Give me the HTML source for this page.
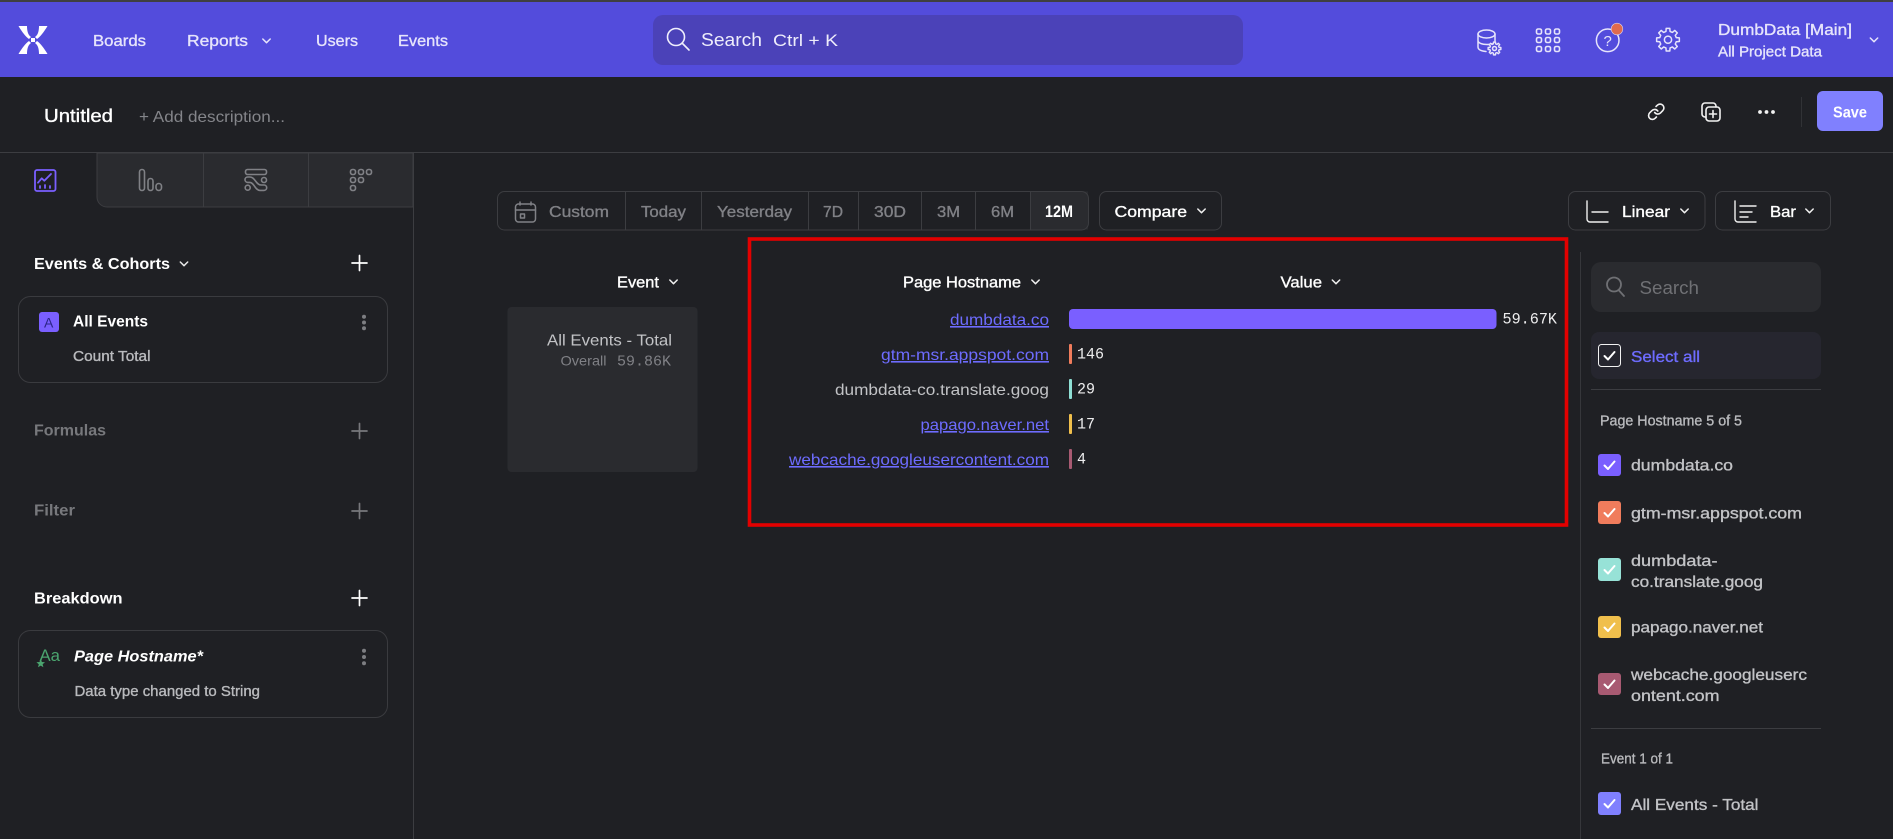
<!DOCTYPE html>
<html lang="en"><head><meta charset="utf-8"><title>Untitled</title>
<style>
html,body{margin:0;padding:0;background:#1f2024;width:1893px;height:839px;overflow:hidden}
svg{display:block}
text{font-family:"Liberation Sans",sans-serif;white-space:pre}
.m{stroke:currentColor;stroke-width:.35}
.mono{font-family:"Liberation Mono",monospace}
.ic{fill:none;stroke-linecap:round;stroke-linejoin:round}
</style></head><body>
<svg xmlns="http://www.w3.org/2000/svg" width="1893" height="839" viewBox="0 0 1893 839">
<defs>
<polygon id="gear" points="8.25,-2.06 11.36,-1.8 11.36,1.8 8.25,2.06 7.29,4.38 9.3,6.76 6.76,9.3 4.38,7.29 2.06,8.25 1.8,11.36 -1.8,11.36 -2.06,8.25 -4.38,7.29 -6.76,9.3 -9.3,6.76 -7.29,4.38 -8.25,2.06 -11.36,1.8 -11.36,-1.8 -8.25,-2.06 -7.29,-4.38 -9.3,-6.76 -6.76,-9.3 -4.38,-7.29 -2.06,-8.25 -1.8,-11.36 1.8,-11.36 2.06,-8.25 4.38,-7.29 6.76,-9.3 9.3,-6.76 7.29,-4.38"/>
<polyline id="chk" points="6.5,12 10,15.5 16.5,8" fill="none" stroke="#fff" stroke-width="2" stroke-linecap="round" stroke-linejoin="round"/>
<path id="chev" d="M.8 .5l3.7 3.7L8.2 .5" fill="none" stroke-width="1.5" stroke-linecap="round" stroke-linejoin="round"/>
<path id="plus" d="M352 0H367M359.5-7.5V7.5" fill="none" stroke-width="1.7" stroke-linecap="round"/>
</defs>

<rect width="1893" height="839" fill="#1f2024"/>

<!-- Top nav -->
<rect width="1893" height="77" fill="#534cdc"/>
<rect width="1893" height="2" fill="#3f3f42"/>
<g fill="#fff">
<path d="M18.5 26H27C27 31 28 35 31 37L29 39C26 37 22 32 18.5 26Z"/>
<path d="M47.5 26H39C39 31 38 35 35 37L37 39C40 37 44 32 47.5 26Z"/>
<path d="M18.5 54H27C27 49 28 45 31 43L29 41C26 43 22 48 18.5 54Z"/>
<path d="M47.5 54H39C39 49 38 45 35 43L37 41C40 43 44 48 47.5 54Z"/>
<rect x="31" y="38" width="4" height="4"/>
</g>
<g fill="#e6e4fb" font-size="16">
<text class="m" color="#e6e4fb" x="93" y="46" textLength="53" lengthAdjust="spacingAndGlyphs">Boards</text>
<text class="m" color="#e6e4fb" x="187" y="46" textLength="61" lengthAdjust="spacingAndGlyphs">Reports</text>
<text class="m" color="#e6e4fb" x="316" y="46" textLength="42" lengthAdjust="spacingAndGlyphs">Users</text>
<text class="m" color="#e6e4fb" x="398" y="46" textLength="50" lengthAdjust="spacingAndGlyphs">Events</text>
</g>
<use href="#chev" x="262" y="38.5" stroke="#e6e4fb"/>
<rect x="653" y="15" width="590" height="50" rx="10" fill="#4b42b8"/>
<g class="ic" stroke="#f0effc" stroke-width="1.6"><circle cx="676" cy="37" r="8.5"/><path d="M682.5 43.5L689 50"/></g>
<text x="701" y="46" font-size="18" fill="#eeedfb" textLength="61" lengthAdjust="spacingAndGlyphs">Search</text>
<text x="773" y="46" font-size="17" fill="#eeedfb" textLength="65" lengthAdjust="spacingAndGlyphs">Ctrl + K</text>

<!-- nav icons -->
<g class="ic" stroke="#e6e4fb" stroke-width="1.5">
<ellipse cx="1486.5" cy="34" rx="8.5" ry="4"/>
<path d="M1478 34V47C1478 49.5 1481 51 1486 51.5M1478 40.5C1478 43 1482 44.5 1487 44.5C1489 44.5 1491 44.2 1492 43.8M1495 34V41"/>
<use href="#gear" transform="translate(1494.5 48.5) scale(.56)" fill="#534cdc" stroke-width="2.6"/>
<circle cx="1494.5" cy="48.5" r="2"/>
<g stroke-width="1.6">
<rect x="1536.5" y="29" width="5" height="5" rx="1.6"/><rect x="1545.5" y="29" width="5" height="5" rx="1.6"/><rect x="1554.5" y="29" width="5" height="5" rx="1.6"/>
<rect x="1536.5" y="37.5" width="5" height="5" rx="1.6"/><rect x="1545.5" y="37.5" width="5" height="5" rx="1.6"/><rect x="1554.5" y="37.5" width="5" height="5" rx="1.6"/>
<rect x="1536.5" y="46.5" width="5" height="5" rx="1.6"/><rect x="1545.5" y="46.5" width="5" height="5" rx="1.6"/><rect x="1554.5" y="46.5" width="5" height="5" rx="1.6"/>
</g>
<circle cx="1607.7" cy="40.3" r="11.3"/>
<use href="#gear" transform="translate(1668 39.7)"/>
<circle cx="1668" cy="39.7" r="3.6"/>
</g>
<text x="1603.5" y="46" font-size="15" fill="#e6e4fb">?</text>
<circle cx="1617" cy="29" r="5.8" fill="#e06a4e" stroke="#d8d5f5" stroke-width=".6"/>
<text class="m" color="#e6e4fb" x="1718" y="35" font-size="16" fill="#e6e4fb" textLength="134" lengthAdjust="spacingAndGlyphs">DumbData [Main]</text>
<text class="m" color="#e6e4fb" x="1718" y="56.5" font-size="14.5" fill="#e6e4fb" textLength="104" lengthAdjust="spacingAndGlyphs">All Project Data</text>
<use href="#chev" x="1869.5" y="37.5" stroke="#e6e4fb"/>

<!-- Title bar -->
<text class="m" color="#fff" x="44" y="122" font-size="18" fill="#fff" textLength="69" lengthAdjust="spacingAndGlyphs">Untitled</text>
<text x="139" y="122" font-size="16" fill="#84858a" textLength="146" lengthAdjust="spacingAndGlyphs">+ Add description...</text>
<path transform="translate(1647 102.5) scale(.77)" class="ic" stroke="#f2f2f2" stroke-width="2.1" d="M10 13a5 5 0 0 0 7.54.54l3-3a5 5 0 0 0-7.07-7.07l-1.72 1.71M14 11a5 5 0 0 0-7.54-.54l-3 3a5 5 0 0 0 7.07 7.07l1.71-1.71"/>
<g class="ic" stroke="#f2f2f2" stroke-width="1.6">
<path d="M1706 117H1705A3 3 0 0 1 1702 114V106A3 3 0 0 1 1705 103H1713A3 3 0 0 1 1716 106V107"/>
<rect x="1706" y="107" width="14" height="14" rx="3"/>
<path d="M1713 110.5V117.5M1709.5 114H1716.5"/>
</g>
<g fill="#f2f2f2"><circle cx="1760" cy="112" r="1.9"/><circle cx="1766.5" cy="112" r="1.9"/><circle cx="1773" cy="112" r="1.9"/></g>
<rect x="1801" y="97" width="1" height="30" fill="#313236"/>
<rect x="1817" y="91" width="66" height="40" rx="6" fill="#8080fe"/>
<text x="1833" y="117.5" font-size="16" font-weight="700" fill="#fff" textLength="34" lengthAdjust="spacingAndGlyphs">Save</text>
<rect y="152" width="1893" height="1" fill="#3c3d41"/>

<!-- Left sidebar tabs -->
<path d="M97 153H413V207H107A10 10 0 0 1 97 197Z" fill="#2a2b2f" stroke="#3c3d41"/>
<rect x="203" y="153" width="1" height="54" fill="#3c3d41"/>
<rect x="308" y="153" width="1" height="54" fill="#3c3d41"/>
<rect x="413" y="153" width="1" height="686" fill="#3c3d41"/>
<g class="ic" stroke="#7a5fff" stroke-width="1.8">
<rect x="35" y="170" width="20.5" height="21" rx="2"/>
<path d="M38 182.7L41.7 178.3L44.3 180.7L51 174"/>
<path d="M40 186V188M45 185V188M50 186V188"/>
</g>
<g class="ic" stroke="#808186" stroke-width="1.6">
<rect x="139.5" y="169.5" width="5" height="21" rx="2.5"/>
<rect x="148" y="178.5" width="5" height="12" rx="2.5"/>
<rect x="156" y="183.5" width="5.5" height="7" rx="2.7"/>
<rect x="245.5" y="169.5" width="21" height="5" rx="2"/>
<path d="M250 177.5C255 177.5 256 185.5 261 185.5H264A2.7 2.7 0 0 1 264 190.9H260C255 190.9 254 182.9 250 182.9H247.7A2.7 2.7 0 0 1 247.7 177.5Z" transform="translate(0 -.5)"/>
<circle cx="264" cy="180" r="2.5"/><circle cx="247.7" cy="187.7" r="2.5"/>
<rect x="350.5" y="169.5" width="5" height="5" rx="2"/><rect x="358.5" y="169.5" width="5" height="5" rx="2"/><rect x="366.5" y="169.5" width="5" height="5" rx="2"/>
<rect x="350.5" y="177.5" width="5" height="5" rx="2"/><rect x="358.5" y="177.5" width="5" height="5" rx="2"/>
<rect x="350.5" y="185.5" width="5" height="5" rx="2"/>
</g>

<!-- Left sidebar contents -->
<text x="34" y="269" font-size="16" font-weight="700" fill="#fff" textLength="136" lengthAdjust="spacingAndGlyphs">Events &amp; Cohorts</text>
<use href="#chev" x="179.5" y="261.5" stroke="#e8e8e8"/>
<use href="#plus" y="263" stroke="#fff"/>
<rect x="18.5" y="296.5" width="369" height="86" rx="12" fill="none" stroke="#3a3b3f"/>
<rect x="39" y="312" width="20" height="20" rx="3" fill="#7a5fff"/>
<text x="44" y="327.5" font-size="14" fill="#2b2488">A</text>
<text x="73" y="326.5" font-size="16" font-weight="700" fill="#fff" textLength="75" lengthAdjust="spacingAndGlyphs">All Events</text>
<text class="m" color="#b9babd" x="73" y="361" font-size="14.5" fill="#b9babd" textLength="77.5" lengthAdjust="spacingAndGlyphs">Count Total</text>
<g fill="#7d7e82"><circle cx="364" cy="316.7" r="2"/><circle cx="364" cy="322.5" r="2"/><circle cx="364" cy="328.3" r="2"/></g>
<text x="34" y="435.5" font-size="16" font-weight="700" fill="#77787c" textLength="72" lengthAdjust="spacingAndGlyphs">Formulas</text>
<use href="#plus" y="431" stroke="#77787c"/>
<text x="34" y="515.5" font-size="16" font-weight="700" fill="#77787c" textLength="41" lengthAdjust="spacingAndGlyphs">Filter</text>
<use href="#plus" y="511" stroke="#77787c"/>
<text x="34" y="603.5" font-size="16" font-weight="700" fill="#fff" textLength="88.5" lengthAdjust="spacingAndGlyphs">Breakdown</text>
<use href="#plus" y="598" stroke="#fff"/>
<rect x="18.5" y="630.5" width="369" height="87" rx="12" fill="none" stroke="#3a3b3f"/>
<text x="39.5" y="661" font-size="17" fill="#4ba56f" textLength="20.5" lengthAdjust="spacingAndGlyphs">Aa</text>
<polygon points="40.7,659 41.9,662 45,662.2 42.6,664.2 43.4,667.3 40.7,665.6 38,667.3 38.8,664.2 36.4,662.2 39.5,662" fill="#4ba56f"/>
<text x="74" y="661.5" font-size="16" font-weight="700" font-style="italic" fill="#fff" textLength="129" lengthAdjust="spacingAndGlyphs">Page Hostname*</text>
<text class="m" color="#b9babd" x="74.5" y="696" font-size="14.5" fill="#b9babd" textLength="185.5" lengthAdjust="spacingAndGlyphs">Data type changed to String</text>
<g fill="#7d7e82"><circle cx="364" cy="650.7" r="2"/><circle cx="364" cy="657" r="2"/><circle cx="364" cy="663.3" r="2"/></g>

<!-- Date range group -->
<rect x="1030" y="191.5" width="58" height="38" fill="#2a2b2f"/>
<rect x="497.5" y="191.5" width="591" height="38.5" rx="7" fill="none" stroke="#3c3d41"/>
<g fill="#3c3d41">
<rect x="625" y="192" width="1" height="38"/><rect x="701" y="192" width="1" height="38"/><rect x="808" y="192" width="1" height="38"/><rect x="858" y="192" width="1" height="38"/><rect x="921" y="192" width="1" height="38"/><rect x="975" y="192" width="1" height="38"/><rect x="1030" y="192" width="1" height="38"/>
</g>
<g class="ic" stroke="#808186" stroke-width="1.5">
<rect x="515.5" y="204" width="20" height="18" rx="3"/>
<path d="M515.5 210H535.5M520 202V205M531 202V205"/>
<rect x="520.5" y="214" width="4" height="4"/>
</g>
<g font-size="16" fill="#808186">
<text class="m" color="#808186" x="549" y="217" textLength="60" lengthAdjust="spacingAndGlyphs">Custom</text>
<text class="m" color="#808186" x="641" y="217" textLength="45" lengthAdjust="spacingAndGlyphs">Today</text>
<text class="m" color="#808186" x="717" y="217" textLength="75" lengthAdjust="spacingAndGlyphs">Yesterday</text>
<text class="m" color="#808186" x="823" y="217" textLength="20" lengthAdjust="spacingAndGlyphs">7D</text>
<text class="m" color="#808186" x="874" y="217" textLength="32" lengthAdjust="spacingAndGlyphs">30D</text>
<text class="m" color="#808186" x="937" y="217" textLength="23" lengthAdjust="spacingAndGlyphs">3M</text>
<text class="m" color="#808186" x="991" y="217" textLength="23" lengthAdjust="spacingAndGlyphs">6M</text>
</g>
<text x="1045" y="217" font-size="17" font-weight="700" fill="#fff" textLength="28" lengthAdjust="spacingAndGlyphs">12M</text>
<rect x="1099.5" y="191.5" width="122" height="38.5" rx="7" fill="none" stroke="#3c3d41"/>
<text class="m" color="#fff" x="1114.5" y="217" font-size="16" fill="#fff" textLength="72.5" lengthAdjust="spacingAndGlyphs">Compare</text>
<use href="#chev" x="1197" y="208.5" stroke="#f0f0f0"/>

<!-- Linear/Bar -->
<rect x="1568.5" y="191.5" width="136.5" height="38.5" rx="7" fill="none" stroke="#3c3d41"/>
<g class="ic" stroke="#f0f0f0" stroke-width="1.4">
<path d="M1587 201V219A3 3 0 0 0 1590 222H1608M1592 212H1608"/>
</g>
<text class="m" color="#fff" x="1622" y="217" font-size="16" fill="#fff" textLength="48" lengthAdjust="spacingAndGlyphs">Linear</text>
<use href="#chev" x="1680" y="208.5" stroke="#f0f0f0"/>
<rect x="1715.5" y="191.5" width="115" height="38.5" rx="7" fill="none" stroke="#3c3d41"/>
<g class="ic" stroke="#f0f0f0" stroke-width="1.4">
<path d="M1735 201V219A3 3 0 0 0 1738 222H1756M1740 206H1756M1740 212H1752M1740 217H1748"/>
</g>
<text class="m" color="#fff" x="1770" y="217" font-size="16" fill="#fff" textLength="26" lengthAdjust="spacingAndGlyphs">Bar</text>
<use href="#chev" x="1805" y="208.5" stroke="#f0f0f0"/>

<!-- Event column -->
<text class="m" color="#fff" x="617" y="287.5" font-size="16" fill="#fff" textLength="42" lengthAdjust="spacingAndGlyphs">Event</text>
<use href="#chev" x="669" y="279.5" stroke="#f0f0f0"/>
<rect x="507.5" y="307" width="190" height="165" rx="4" fill="#2a2b2f"/>
<text x="547" y="345.5" font-size="16" fill="#c2c3c6" textLength="125" lengthAdjust="spacingAndGlyphs">All Events - Total</text>
<text x="560.5" y="365.5" font-size="14" fill="#808186" textLength="46" lengthAdjust="spacingAndGlyphs">Overall</text>
<text class="mono" x="617" y="365.5" font-size="15" fill="#808186" textLength="54" lengthAdjust="spacingAndGlyphs">59.86K</text>

<!-- Red highlight box -->
<rect x="749.5" y="239" width="817" height="286" fill="none" stroke="#e30000" stroke-width="3.6"/>

<!-- Breakdown column -->
<text class="m" color="#fff" x="903" y="287.5" font-size="16" fill="#fff" textLength="118" lengthAdjust="spacingAndGlyphs">Page Hostname</text>
<use href="#chev" x="1031" y="279.5" stroke="#f0f0f0"/>
<text class="m" color="#fff" x="1280.5" y="287.5" font-size="16" fill="#fff" textLength="41.5" lengthAdjust="spacingAndGlyphs">Value</text>
<use href="#chev" x="1331.5" y="279.5" stroke="#f0f0f0"/>
<g font-size="16">
<text x="950" y="325" fill="#6e6cff" text-decoration="underline" textLength="99" lengthAdjust="spacingAndGlyphs">dumbdata.co</text>
<text x="881" y="360" fill="#6e6cff" text-decoration="underline" textLength="168" lengthAdjust="spacingAndGlyphs">gtm-msr.appspot.com</text>
<text x="835" y="395" fill="#c2c3c6" textLength="214" lengthAdjust="spacingAndGlyphs">dumbdata-co.translate.goog</text>
<text x="920.5" y="430" fill="#6e6cff" text-decoration="underline" textLength="128.5" lengthAdjust="spacingAndGlyphs">papago.naver.net</text>
<text x="789" y="465" fill="#6e6cff" text-decoration="underline" textLength="260" lengthAdjust="spacingAndGlyphs">webcache.googleusercontent.com</text>
</g>
<rect x="1069" y="309" width="427.5" height="20" rx="4" fill="#7a5fff"/>
<rect x="1069" y="344" width="3" height="20" rx="1" fill="#f07c5c"/>
<rect x="1069" y="379" width="3" height="20" rx="1" fill="#8fe0d5"/>
<rect x="1069" y="414" width="3" height="20" rx="1" fill="#f0bf4c"/>
<rect x="1069" y="449" width="3" height="20" rx="1" fill="#a85a72"/>
<g font-size="16" fill="#ededee">
<text class="mono" x="1502.5" y="323.5" textLength="54.5" lengthAdjust="spacingAndGlyphs">59.67K</text>
<text class="mono" x="1077" y="358.5" textLength="27" lengthAdjust="spacingAndGlyphs">146</text>
<text class="mono" x="1077" y="393.5" textLength="18" lengthAdjust="spacingAndGlyphs">29</text>
<text class="mono" x="1077" y="428.5" textLength="18" lengthAdjust="spacingAndGlyphs">17</text>
<text class="mono" x="1077" y="463.5" textLength="9" lengthAdjust="spacingAndGlyphs">4</text>
</g>

<!-- Right legend panel -->
<rect x="1580" y="252" width="1" height="587" fill="#36373b"/>
<rect x="1591" y="262" width="230" height="50" rx="10" fill="#2a2b2f"/>
<g class="ic" stroke="#6f7074" stroke-width="1.8"><circle cx="1614" cy="284.5" r="7"/><path d="M1619 290.5L1624 296"/></g>
<text x="1639.5" y="294" font-size="18" fill="#6f7074" textLength="59.5" lengthAdjust="spacingAndGlyphs">Search</text>
<rect x="1591" y="332" width="230" height="47" rx="8" fill="#26262f"/>
<rect x="1598.5" y="344.5" width="22" height="22" rx="3" fill="none" stroke="#f2f2f2"/>
<use href="#chk" x="1598" y="344" style="stroke-width:1.6"/>
<text class="m" color="#6e6cff" x="1631" y="362" font-size="16" fill="#6e6cff" textLength="69" lengthAdjust="spacingAndGlyphs">Select all</text>
<rect x="1591" y="389" width="230" height="1" fill="#3c3d41"/>
<text class="m" color="#b9babd" x="1600" y="425.5" font-size="15" fill="#b9babd" textLength="142" lengthAdjust="spacingAndGlyphs">Page Hostname 5 of 5</text>

<rect x="1598" y="454" width="23" height="22" rx="3" fill="#7a5fff"/><use href="#chk" x="1598" y="453.5"/>
<rect x="1598" y="501" width="23" height="23" rx="3" fill="#f07c5c"/><use href="#chk" x="1598" y="501"/>
<rect x="1598" y="558" width="23" height="23" rx="3" fill="#97e2d7"/><use href="#chk" x="1598" y="558"/>
<rect x="1598" y="616" width="23" height="22" rx="3" fill="#f0bf4c"/><use href="#chk" x="1598" y="615.5"/>
<rect x="1598" y="673" width="23" height="22" rx="3" fill="#a85a72"/><use href="#chk" x="1598" y="672.5"/>
<g font-size="16" fill="#c2c3c6">
<text class="m" color="#c2c3c6" x="1631" y="470.5" textLength="102" lengthAdjust="spacingAndGlyphs">dumbdata.co</text>
<text class="m" color="#c2c3c6" x="1631" y="518.5" textLength="171" lengthAdjust="spacingAndGlyphs">gtm-msr.appspot.com</text>
<text class="m" color="#c2c3c6" x="1631" y="566" textLength="86.5" lengthAdjust="spacingAndGlyphs">dumbdata-</text>
<text class="m" color="#c2c3c6" x="1631" y="587" textLength="132" lengthAdjust="spacingAndGlyphs">co.translate.goog</text>
<text class="m" color="#c2c3c6" x="1631" y="632.5" textLength="132" lengthAdjust="spacingAndGlyphs">papago.naver.net</text>
<text class="m" color="#c2c3c6" x="1631" y="680" textLength="176" lengthAdjust="spacingAndGlyphs">webcache.googleuserc</text>
<text class="m" color="#c2c3c6" x="1631" y="701" textLength="88.5" lengthAdjust="spacingAndGlyphs">ontent.com</text>
</g>
<rect x="1591" y="728" width="230" height="1" fill="#3c3d41"/>
<text class="m" color="#b9babd" x="1601" y="763.5" font-size="15" fill="#b9babd" textLength="72" lengthAdjust="spacingAndGlyphs">Event 1 of 1</text>
<rect x="1598" y="792" width="23" height="23" rx="3" fill="#8080fe"/><use href="#chk" x="1598" y="792"/>
<text class="m" color="#c2c3c6" x="1631" y="810" font-size="16" fill="#c2c3c6" textLength="127.5" lengthAdjust="spacingAndGlyphs">All Events - Total</text>
</svg>
</body></html>
